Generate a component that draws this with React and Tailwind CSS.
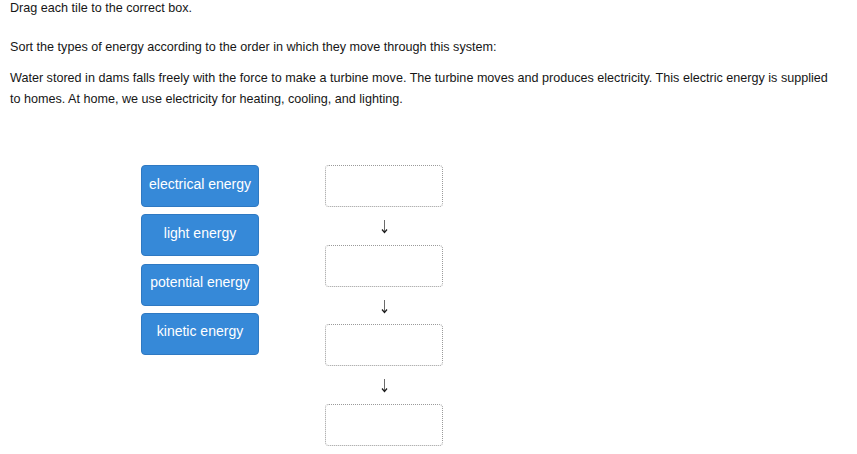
import React from "react";

const tiles = ["electrical energy", "light energy", "potential energy", "kinetic energy"];

const Tile = ({ label }) => (
  <div className="flex h-[42px] w-[118px] items-center justify-center rounded-[4px] border border-[#2f79c2] bg-[#3689d8] pb-[4px] text-[14px] text-white">
    {label}
  </div>
);

const DropBox = () => (
  <div className="h-[42px] w-[118px] rounded-[4px] border border-dotted border-[#9a9a9a] bg-white" />
);

const Arrow = () => (
  <div className="flex h-[37.5px] justify-center pt-[13px]">
    <svg width="7" height="14" viewBox="0 0 7 14">
      <line x1="3.5" y1="0" x2="3.5" y2="12.5" stroke="#6b6b6b" strokeWidth="1" />
      <polyline points="1,9.5 3.5,12.5 6,9.5" fill="none" stroke="#1a1a1a" strokeWidth="1.2" />
    </svg>
  </div>
);

export default function App() {
  return (
    <div
      className="min-h-[454px] w-full bg-white pl-[10px] pr-[22px] text-[12.6px] text-[#161616]"
      style={{ fontFamily: '"Liberation Sans", Arial, sans-serif' }}
    >
      <p className="leading-[17px]">Drag each tile to the correct box.</p>
      <p className="mt-[20px] leading-[21px]">
        Sort the types of energy according to the order in which they move through this system:
      </p>
      <p className="mt-[10px] leading-[21px]">
        Water stored in dams falls freely with the force to make a turbine move. The turbine moves and produces electricity. This electric energy is supplied to homes. At home, we use electricity for heating, cooling, and lighting.
      </p>

      <div className="mt-[55px] flex gap-[66px] pl-[131px]">
        <div className="flex flex-col gap-[7.33px]">
          {tiles.map((t) => (
            <Tile key={t} label={t} />
          ))}
        </div>
        <div className="flex flex-col">
          <DropBox />
          <Arrow />
          <DropBox />
          <Arrow />
          <DropBox />
          <Arrow />
          <DropBox />
        </div>
      </div>
    </div>
  );
}
